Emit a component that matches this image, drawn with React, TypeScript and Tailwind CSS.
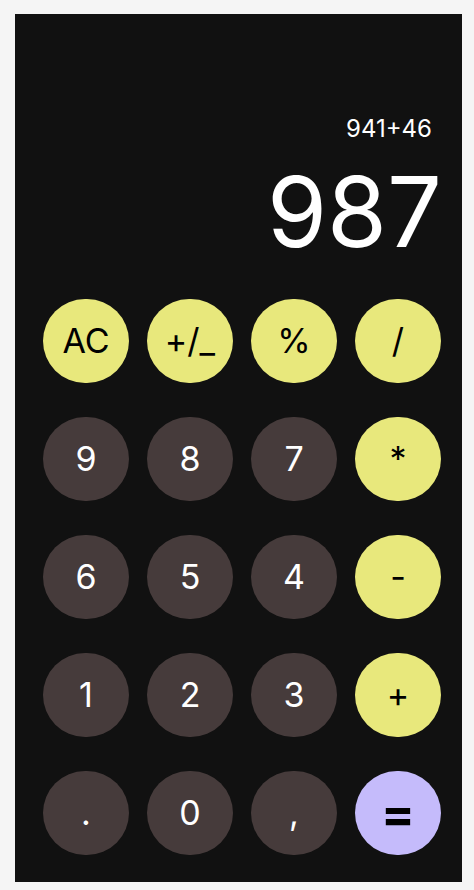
import React from "react";

type Kind = "op" | "num" | "eq";
const rows: { label: string; kind: Kind }[][] = [
  [
    { label: "AC", kind: "op" },
    { label: "+/_", kind: "op" },
    { label: "%", kind: "op" },
    { label: "/", kind: "op" },
  ],
  [
    { label: "9", kind: "num" },
    { label: "8", kind: "num" },
    { label: "7", kind: "num" },
    { label: "*", kind: "op" },
  ],
  [
    { label: "6", kind: "num" },
    { label: "5", kind: "num" },
    { label: "4", kind: "num" },
    { label: "-", kind: "op" },
  ],
  [
    { label: "1", kind: "num" },
    { label: "2", kind: "num" },
    { label: "3", kind: "num" },
    { label: "+", kind: "op" },
  ],
  [
    { label: ".", kind: "num" },
    { label: "0", kind: "num" },
    { label: ",", kind: "num" },
    { label: "=", kind: "eq" },
  ],
];

function Key({ label, kind }: { label: string; kind: Kind }) {
  const base =
    "w-[86px] h-[84px] rounded-full flex items-center justify-center leading-none";
  if (kind === "num")
    return <div className={`${base} bg-[#463b3b] text-white text-[34px]`}>{label}</div>;
  if (kind === "eq")
    return (
      <div className={`${base} bg-[#c5bbfb] text-black text-[50px] font-bold`}>{label}</div>
    );
  return <div className={`${base} bg-[#e8e87c] text-black text-[34px]`}>{label}</div>;
}

export default function App() {
  return (
    <div
      className="w-[474px] h-[890px] bg-[#f5f5f5] pt-[14px] pl-[15px]"
      style={{ fontFamily: "Inter, 'Noto Sans', sans-serif" }}
    >
      <div className="w-[447px] h-[868px] bg-[#111111] flex flex-col pl-[28px] pr-[21px]">
        <div className="flex flex-col items-end pt-[103px]">
          <div className="text-[24px] leading-none text-white mr-[9px]">941+46</div>
          <div className="text-[97px] leading-none text-white mt-[22px] -mr-[1px]">987</div>
        </div>
        <div className="flex flex-col gap-[34px] mt-[39px]">
          {rows.map((r, i) => (
            <div key={i} className="flex gap-[18px]">
              {r.map((k) => (
                <Key key={k.label} {...k} />
              ))}
            </div>
          ))}
        </div>
      </div>
    </div>
  );
}
